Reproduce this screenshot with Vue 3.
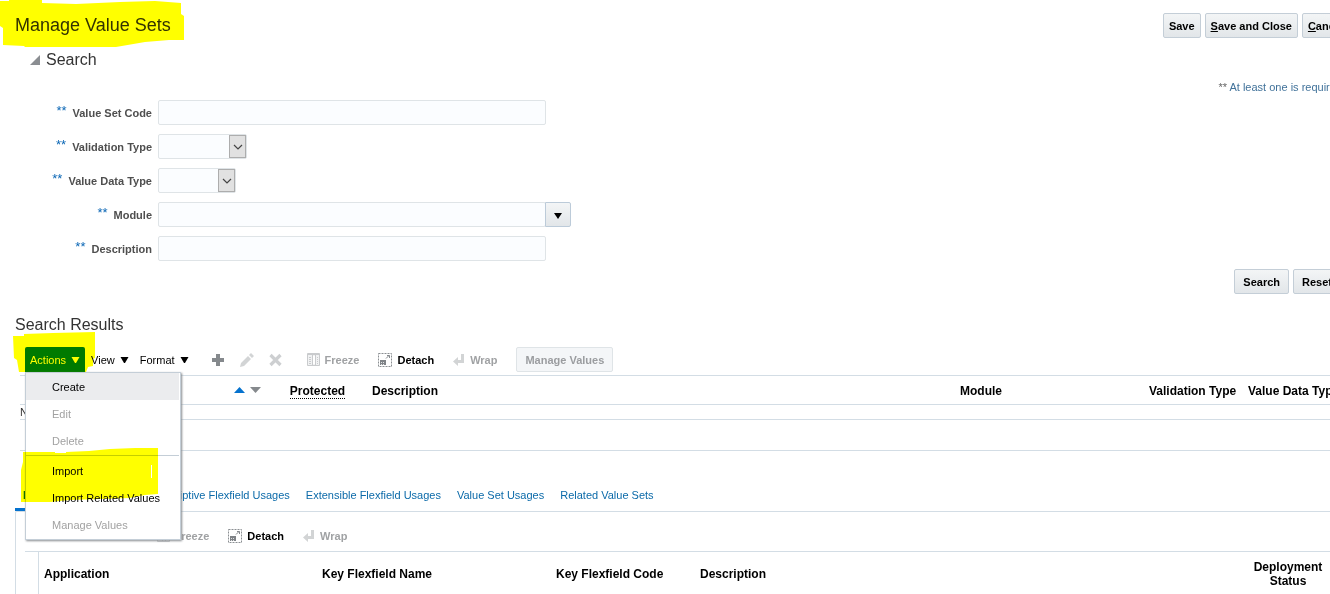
<script setup>
import { ref } from 'vue'

const code = ref('')
const validationType = ref('')
const dataType = ref('')
const moduleName = ref('')
const description = ref('')

const tabs = [
  'Key Flexfield Usages',
  'Descriptive Flexfield Usages',
  'Extensible Flexfield Usages',
  'Value Set Usages',
  'Related Value Sets'
]

const menuTop = [
  { label: 'Create', active: true },
  { label: 'Edit', disabled: true },
  { label: 'Delete', disabled: true }
]
const menuBottom = [
  { label: 'Import' },
  { label: 'Import Related Values' },
  { label: 'Manage Values', disabled: true }
]
</script>

<template>
  <main class="page">
    <div class="content">
      <header class="top">
        <h1>Manage Value Sets</h1>
        <div class="buttons">
          <button class="btn narrow" type="button">Save</button>
          <button class="btn narrow" type="button"><u>S</u>ave and Close</button>
          <button class="btn narrow" type="button"><u>C</u>ancel</button>
        </div>
      </header>

      <section>
        <h2 class="search-title">
          <svg width="10" height="10" viewBox="0 0 10 10" aria-hidden="true"><path d="M10 0V10H0Z" fill="#8b8e92" /></svg>
          Search
        </h2>
        <p class="hint"><span>**</span> At least one is required</p>

        <form class="form" @submit.prevent>
          <label for="code"><i>**</i>Value Set Code</label>
          <input id="code" v-model="code" class="field" type="text" />

          <label for="vtype"><i>**</i>Validation Type</label>
          <div class="select wide">
            <select id="vtype" v-model="validationType"><option value=""></option><option>Format Only</option></select>
            <span class="arrow"><svg width="10" height="6" viewBox="0 0 10 6"><path d="M1 1L5 5L9 1" fill="none" stroke="#444" stroke-width="1.2" /></svg></span>
          </div>

          <label for="dtype"><i>**</i>Value Data Type</label>
          <div class="select">
            <select id="dtype" v-model="dataType"><option value=""></option><option>Number</option></select>
            <span class="arrow"><svg width="10" height="6" viewBox="0 0 10 6"><path d="M1 1L5 5L9 1" fill="none" stroke="#444" stroke-width="1.2" /></svg></span>
          </div>

          <label for="module"><i>**</i>Module</label>
          <div class="combo">
            <input id="module" v-model="moduleName" class="field" type="text" />
            <button type="button" aria-label="Choose module"><svg width="8" height="6" viewBox="0 0 8 6"><path d="M0 0H8L4 6Z" fill="#000" /></svg></button>
          </div>

          <label for="desc"><i>**</i>Description</label>
          <input id="desc" v-model="description" class="field" type="text" />
        </form>

        <div class="buttons form-buttons">
          <button class="btn" type="button">Search</button>
          <button class="btn" type="button">Reset</button>
        </div>
      </section>

      <section>
        <h2 class="results-title">Search Results</h2>

        <div class="toolbar">
          <div class="menu-anchor">
            <button class="menu-btn open" type="button" aria-haspopup="true" aria-expanded="true">Actions<svg width="9" height="6" viewBox="0 0 9 6"><path d="M.5 0H8.500L5 6H4Z" fill="currentColor" /></svg></button>
            <ul class="menu">
              <li v-for="m in menuTop" :key="m.label">
                <button type="button" :class="{ active: m.active }" :disabled="m.disabled">{{ m.label }}</button>
              </li>
              <li class="separator" role="separator"></li>
              <li v-for="m in menuBottom" :key="m.label">
                <button type="button" :disabled="m.disabled">{{ m.label }}</button>
              </li>
            </ul>
          </div>
          <button v-for="m in ['View', 'Format']" :key="m" class="menu-btn" type="button">{{ m }}<svg width="9" height="6" viewBox="0 0 9 6"><path d="M.5 0H8.500L5 6H4Z" fill="currentColor" /></svg></button>
          <div class="icons">
            <button type="button" aria-label="Create"><svg width="15" height="14" viewBox="0 0 15 14"><path d="M6 1H10V5H14V9H10V13H6V9H2V5H6Z" fill="#85898d" /></svg></button>
            <button type="button" aria-label="Edit" disabled><svg width="15" height="14" viewBox="0 0 15 14"><path d="M1 14L2 10L9 3L12 6L5 13ZM10 2L12 0L15 3L13 5Z" fill="#d2d4d5" /></svg></button>
            <button type="button" aria-label="Delete" disabled><svg width="15" height="14" viewBox="0 0 15 14"><path d="M2.500 2L12.500 12M12.500 2L2.500 12" stroke="#cdcfd1" stroke-width="3.200" /></svg></button>
          </div>
          <div class="tools">
            <button class="tool" type="button" disabled><svg width="13" height="13" viewBox="0 0 13 13"><path d="M.5 .5H12.500V12.500H.5Z" fill="#f1f2f3" stroke="#c9cbcd" /><path d="M6 3H8V11H6Z" fill="#fff" /><path d="M5.500 2V12M8.500 2V12M1 1.500H12" stroke="#c9cbcd" /><path d="M2 4.500H4M2 6.500H4M2 8.500H4M2 10.500H4M10 4.500H11M10 6.500H11M10 8.500H11M10 10.500H11" stroke="#c9cbcd" /></svg>Freeze</button>
            <button class="tool" type="button"><svg width="14" height="14" viewBox="0 0 14 14"><path d="M.5 .5H13.500V13.500H.5Z" fill="none" stroke="#8b8f92" stroke-dasharray="2 1" /><path d="M2 7H8V12H2Z" fill="#7f8387" /><path d="M3 9.500H7M3 11.500H7" stroke="#dfe1e2" stroke-dasharray="1 1" /><path d="M8 5.500L11 2.500M9 2.500H11.500V5" fill="none" stroke="#85898d" /></svg>Detach</button>
            <button class="tool" type="button" disabled><svg width="12" height="12" viewBox="0 0 12 12"><path d="M8 0H11V9H5V12L0 7.500L5 3V6H8Z" fill="#d2d4d5" /></svg>Wrap</button>
            <button class="btn off" type="button" disabled>Manage Values</button>
          </div>
        </div>

        <table class="results">
          <colgroup><col class="c1" /><col class="c2" /><col /><col class="c4" /><col class="c2" /><col class="c6" /></colgroup>
          <thead>
            <tr>
              <th class="sort" aria-label="Value Set Code"><svg width="28" height="7" viewBox="0 0 28 7"><path d="M0 7L5.500 1L11 7Z" fill="#0572ce" /><path d="M16 1H27L21.500 7Z" fill="#85898d" /></svg></th>
              <th class="mid"><abbr>Protected</abbr></th>
              <th>Description</th>
              <th>Module</th>
              <th>Validation Type</th>
              <th>Value Data Type</th>
            </tr>
          </thead>
          <tbody><tr><td colspan="6">No data to display.</td></tr></tbody>
        </table>
        <div class="status"></div>
      </section>

      <section class="usages">
        <nav class="tabs">
          <a v-for="(t, i) in tabs" :key="t" href="#" :class="{ current: i === 0 }">{{ t }}</a>
        </nav>
        <div class="panel">
          <div class="toolbar">
            <button v-for="m in ['View', 'Format']" :key="m" class="menu-btn" type="button">{{ m }}<svg width="9" height="6" viewBox="0 0 9 6"><path d="M.5 0H8.500L5 6H4Z" fill="currentColor" /></svg></button>
            <div class="tools">
              <button class="tool" type="button" disabled><svg width="13" height="13" viewBox="0 0 13 13"><path d="M.5 .5H12.500V12.500H.5Z" fill="#f1f2f3" stroke="#c9cbcd" /><path d="M5.500 2V12M8.500 2V12M1 1.500H12" stroke="#c9cbcd" /></svg>Freeze</button>
              <button class="tool" type="button"><svg width="14" height="14" viewBox="0 0 14 14"><path d="M.5 .5H13.500V13.500H.5Z" fill="none" stroke="#8b8f92" stroke-dasharray="2 1" /><path d="M2 7H8V12H2Z" fill="#7f8387" /><path d="M3 9.500H7M3 11.500H7" stroke="#dfe1e2" stroke-dasharray="1 1" /><path d="M8 5.500L11 2.500M9 2.500H11.500V5" fill="none" stroke="#85898d" /></svg>Detach</button>
              <button class="tool" type="button" disabled><svg width="12" height="12" viewBox="0 0 12 12"><path d="M8 0H11V9H5V12L0 7.500L5 3V6H8Z" fill="#d2d4d5" /></svg>Wrap</button>
            </div>
          </div>
          <div class="usage-grid">
            <table class="usage-table">
              <colgroup><col class="u1" /><col class="u2" /><col class="u3" /><col /><col class="u5" /></colgroup>
              <thead>
                <tr>
                  <th>Application</th>
                  <th>Key Flexfield Name</th>
                  <th>Key Flexfield Code</th>
                  <th>Description</th>
                  <th class="wrap">Deployment Status</th>
                </tr>
              </thead>
            </table>
          </div>
        </div>
      </section>
    </div>

    <svg class="marker" width="200" height="510" viewBox="0 0 200 510" aria-hidden="true">
      <path d="M0 1H9V0H42V3L76 4L120 2L155 1L181 3V14L184 16V40H169L145 42L116 47H25L24 46L3 45V28L0 26Z" />
      <path d="M13 336H24V334L53 333L95 332V358L93 359V366L88 367L86 372H19L17 360L14 358Z" />
      <path d="M23 452H55V453H66V452L89 451L110 449L135 448H158V494L145 495L130 498L70 500L50 502H21V470L23 462ZM151 465V478H152V465Z" />
    </svg>
  </main>
</template>

<style>
html {
  overflow: hidden;
  background: #fff;
}
</style>

<style scoped>
.page {
  position: relative;
  overflow: hidden;
  font: 11px/14px "Liberation Sans", Arial, sans-serif;
  color: #000;
}
/* the page is wider than the window, its right edge scrolls out of view */
.content {
  width: calc(100% + 20px);
}
button, input, select {
  font: inherit;
  color: inherit;
  margin: 0;
  box-sizing: border-box;
}
button {
  white-space: nowrap;
}
h1, h2 {
  margin: 0;
  font-weight: 400;
  color: #333;
}
.top {
  display: flex;
  justify-content: space-between;
  padding: 13px 0 0 15px;
}
h1 {
  font-size: 18px;
  line-height: 24px;
}
.buttons {
  display: flex;
  gap: 4px;
}
.btn {
  height: 25px;
  padding: 0 8px;
  border: 1px solid #c4ced7;
  border-radius: 2px;
  background: linear-gradient(#f3f5f6, #e2e6e9);
  font-weight: 700;
}
.btn.narrow {
  padding: 0 5px;
}
.btn.off {
  border-color: #dfe4e7;
  background: #f4f6f8;
  color: #9b9da0;
}
.search-title {
  display: flex;
  align-items: center;
  gap: 6px;
  margin-top: 12px;
  padding-left: 30px;
  font-size: 16px;
  line-height: 20px;
}
.hint {
  margin: 10px 8px 6px;
  text-align: right;
  color: #41729a;
}
.hint span {
  color: #666;
}
.form {
  display: grid;
  grid-template-columns: 152px 1fr;
  gap: 9px 6px;
}
.form label {
  display: flex;
  justify-content: flex-end;
  gap: 6px;
  line-height: 26px;
  height: 25px;
  font-weight: 700;
  color: #4f4f4f;
}
.form label i {
  font-size: 13px;
  line-height: 22px;
  font-style: normal;
  font-weight: 400;
  color: #0a66b5;
}
.field {
  width: 388px;
  height: 25px;
  padding: 0 4px;
  border: 1px solid #dfe4e7;
  border-radius: 2px;
  background: #fbfdff;
}
.select {
  position: relative;
  width: 78px;
}
.select.wide {
  width: 89px;
}
.select select {
  display: block;
  width: 100%;
  height: 25px;
  appearance: none;
  border: 1px solid #dfe4e7;
  border-radius: 2px;
  background: #fbfdff;
}
.arrow {
  position: absolute;
  top: 1px;
  right: 1px;
  bottom: 1px;
  width: 17px;
  box-sizing: border-box;
  display: flex;
  align-items: center;
  justify-content: center;
  border: 1px solid #adadad;
  background: #e1e1e1;
  pointer-events: none;
}
.combo {
  display: flex;
}
.combo button {
  width: 26px;
  height: 25px;
  margin-left: -1px;
  padding: 0;
  border: 1px solid #bccbd9;
  border-radius: 0 2px 2px 0;
  background: linear-gradient(#f3f5f6, #e2e6e9);
}
.form-buttons {
  justify-content: flex-end;
  margin: 8px 9px 0 0;
}
.results-title {
  margin: 21px 0 12px 15px;
  font-size: 16px;
  line-height: 20px;
}
.toolbar {
  display: flex;
  align-items: center;
  gap: 1px;
  height: 25px;
  padding-left: 25px;
}
.menu-anchor {
  position: relative;
}
.menu-btn {
  display: flex;
  align-items: center;
  gap: 5px;
  height: 25px;
  padding: 0 5px;
  border: 0;
  border-radius: 2px 2px 0 0;
  background: none;
}
.menu-btn.open {
  background: #007a00;
  color: #fff;
}
.menu {
  position: absolute;
  top: 100%;
  left: 0;
  z-index: 1;
  width: 156px;
  box-sizing: border-box;
  margin: 0;
  padding: 0 1px 1px 0;
  list-style: none;
  border: 1px solid #c4ced7;
  background: #fff;
  box-shadow: 1px 1px 2px #888c90;
}
.menu button {
  display: block;
  width: 100%;
  height: 27px;
  padding: 0 26px;
  border: 0;
  background: none;
  text-align: left;
}
.menu button.active {
  background: #ebecee;
}
.menu button:disabled {
  color: #a2a2a2;
}
.separator {
  height: 1px;
  margin: 1px 0;
  background: #c4ced7;
}
.icons {
  display: flex;
  gap: 14px;
  margin-left: 15px;
}
.icons button {
  display: flex;
  padding: 0;
  border: 0;
  background: none;
}
.tools {
  display: flex;
  align-items: center;
  gap: 19px;
  margin-left: 23px;
}
.tool {
  display: flex;
  align-items: center;
  gap: 5px;
  padding: 0;
  border: 0;
  background: none;
  font-weight: 700;
}
.tool:disabled {
  color: #a0a2a4;
}
table {
  table-layout: fixed;
  border-collapse: separate;
  border-spacing: 0;
  font-size: 12px;
}
th {
  padding: 0 5px;
  text-align: left;
  white-space: nowrap;
}
.mid {
  text-align: center;
}
.results {
  width: calc(100% - 20px);
  margin: 3px 0 0 20px;
}
.results th {
  height: 26px;
  padding-top: 2px;
  border-top: 1px solid #d3dde5;
  border-bottom: 1px solid #d3dde5;
}
.results th.sort {
  padding: 0 6px 2px;
  text-align: right;
}
.results td {
  height: 14px;
  padding: 0;
  border-bottom: 1px solid #d3dde5;
  font-size: 11px;
  line-height: 14px;
  color: #333;
}
.results abbr {
  border-bottom: 1px dotted #000;
}
.c1 { width: 248px; }
.c2 { width: 99px; }
.c4 { width: 189px; }
.c6 { width: 107px; }
.status {
  height: 30px;
  margin-left: 20px;
  border-bottom: 1px solid #d3dde5;
}
.usages {
  padding-left: 15px;
}
.tabs {
  display: flex;
  gap: 16px;
  padding-top: 30px;
}
.tabs a {
  padding-top: 7px;
  color: #0b6aa9;
  text-decoration: none;
}
.tabs a.current {
  margin-right: -6px;
  padding: 7px 8px 6px;
  border-bottom: 3px solid #0572ce;
  font-weight: 700;
}
.panel {
  padding-left: 9px;
  border: 1px solid #d3dde5;
  border-width: 1px 0 0 1px;
  border-radius: 2px 0 0 0;
}
.panel .toolbar {
  margin: 11px 0 3px;
  padding-left: 0;
}
.usage-grid {
  padding-left: 13px;
  border-top: 1px solid #d3dde5;
}
.usage-table {
  width: 100%;
  border-left: 1px solid #d3dde5;
}
.usage-table th {
  height: 44px;
  line-height: 14px;
}
.usage-table th.wrap {
  padding: 0 20px;
  text-align: center;
  white-space: normal;
}
.u1 { width: 278px; }
.u2 { width: 234px; }
.u3 { width: 144px; }
.u5 { width: 124px; }
.marker {
  position: absolute;
  top: 0;
  left: 0;
  z-index: 2;
  mix-blend-mode: multiply;
  fill: #ff0;
  pointer-events: none;
}
</style>
